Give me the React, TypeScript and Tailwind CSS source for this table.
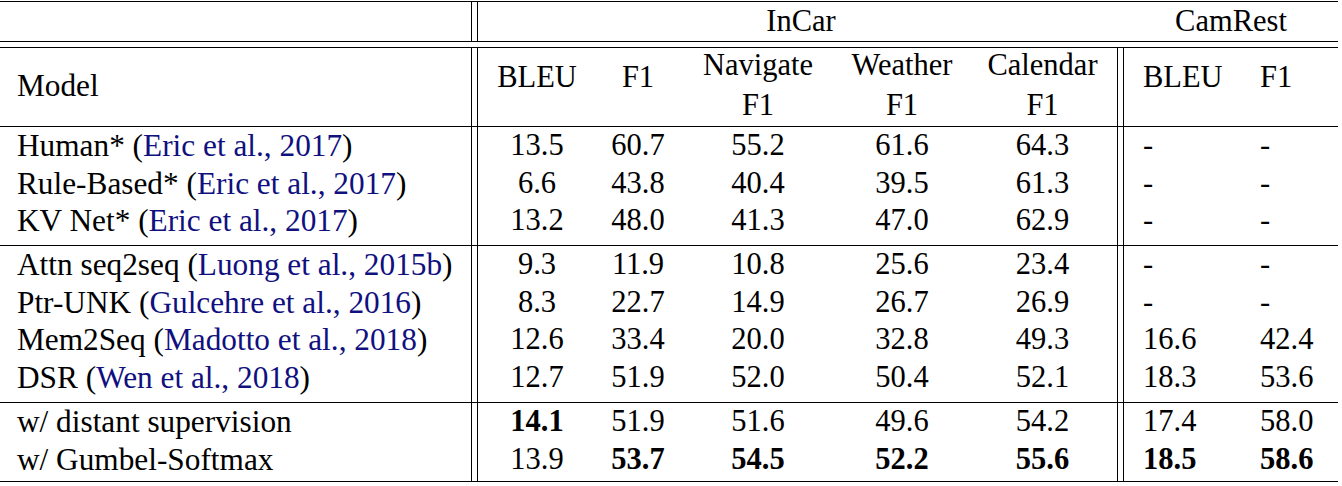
import React from 'react'

type Cell = { v: string; b?: boolean }
type Row = {
  name: string
  cite?: { who: string; year: string }
  incar: Cell[]
  camrest: Cell[]
}

const c = (v: string): Cell => ({ v })
const b = (v: string): Cell => ({ v, b: true })
const dash = [c('-'), c('-')]

const blocks: { last: string; rows: Row[] }[] = [
  {
    last: 'h-[43px]',
    rows: [
      { name: 'Human*', cite: { who: 'Eric et al.', year: '2017' }, incar: ['13.5', '60.7', '55.2', '61.6', '64.3'].map(c), camrest: dash },
      { name: 'Rule-Based*', cite: { who: 'Eric et al.', year: '2017' }, incar: ['6.6', '43.8', '40.4', '39.5', '61.3'].map(c), camrest: dash },
      { name: 'KV Net*', cite: { who: 'Eric et al.', year: '2017' }, incar: ['13.2', '48.0', '41.3', '47.0', '62.9'].map(c), camrest: dash }
    ]
  },
  {
    last: 'h-[43.5px]',
    rows: [
      { name: 'Attn seq2seq', cite: { who: 'Luong et al.', year: '2015b' }, incar: ['9.3', '11.9', '10.8', '25.6', '23.4'].map(c), camrest: dash },
      { name: 'Ptr-UNK', cite: { who: 'Gulcehre et al.', year: '2016' }, incar: ['8.3', '22.7', '14.9', '26.7', '26.9'].map(c), camrest: dash },
      { name: 'Mem2Seq', cite: { who: 'Madotto et al.', year: '2018' }, incar: ['12.6', '33.4', '20.0', '32.8', '49.3'].map(c), camrest: [c('16.6'), c('42.4')] },
      { name: 'DSR', cite: { who: 'Wen et al.', year: '2018' }, incar: ['12.7', '51.9', '52.0', '50.4', '52.1'].map(c), camrest: [c('18.3'), c('53.6')] }
    ]
  },
  {
    last: 'h-[40.5px]',
    rows: [
      { name: 'w/ distant supervision', incar: [b('14.1'), c('51.9'), c('51.6'), c('49.6'), c('54.2')], camrest: [c('17.4'), c('58.0')] },
      { name: 'w/ Gumbel-Softmax', incar: [c('13.9'), b('53.7'), b('54.5'), b('52.2'), b('55.6')], camrest: [b('18.5'), b('58.6')] }
    ]
  }
]

// column boxes, measured off the reference
const incarCols = ['w-[118px]', 'w-[84px]', 'w-[156px]', 'w-[132px]', 'w-[149px]']
const camCols = ['w-[118px] pl-[19px]', 'w-[96px] pl-[18px]']

const Bar = () => <div className="w-[7px] shrink-0 border-x border-black" />

function DataRow({ row, tall }: { row: Row; tall?: string }) {
  return (
    <div className={`flex leading-[37.5px] ${tall ?? ''}`}>
      <div className="w-[471px] shrink-0 pl-[17px] text-[31.3px] whitespace-nowrap">
        {row.name}
        {row.cite && (
          <>
            {' ('}
            <span className="text-[#10107f]">{row.cite.who}, {row.cite.year}</span>
            {')'}
          </>
        )}
      </div>
      <Bar />
      {row.incar.map((cell, i) => (
        <div key={i} className={`${incarCols[i]} shrink-0 text-center ${cell.b ? 'font-bold' : ''}`}>
          {cell.v}
        </div>
      ))}
      <Bar />
      {row.camrest.map((cell, i) => (
        <div key={i} className={`${camCols[i]} shrink-0 text-left ${cell.b ? 'font-bold' : ''}`}>
          {cell.v}
        </div>
      ))}
    </div>
  )
}

export default function App() {
  return (
    <div className="bg-white text-black font-['Liberation_Serif',serif] text-[30.5px]">
      <div className="mt-px w-[1338px] border-t border-black">
        {/* dataset row */}
        <div className="flex h-[39px] leading-[34px]">
          <div className="w-[471px] shrink-0" />
          <Bar />
          <div className="w-[646px] shrink-0 pt-[2px] text-center">InCar</div>
          <div className="w-[214px] shrink-0 pt-[2px] text-center">CamRest</div>
        </div>
        <div className="h-[7px] border-y border-black" />

        {/* metric headers */}
        <div className="flex h-[79px] border-b border-black leading-[34px]">
          <div className="w-[471px] shrink-0 pl-[17px] pt-[21px] text-[31.3px]">Model</div>
          <Bar />
          <div className="w-[118px] shrink-0 pt-[12px] text-center">BLEU</div>
          <div className="w-[84px] shrink-0 pt-[12px] text-center">F1</div>
          {['Navigate', 'Weather', 'Calendar'].map((h, i) => (
            <div key={h} className={`${incarCols[i + 2]} shrink-0 text-center`}>
              <span className="block">{h}</span>
              <span className="mt-[6px] block">F1</span>
            </div>
          ))}
          <Bar />
          <div className="w-[118px] shrink-0 pl-[19px] pt-[12px]">BLEU</div>
          <div className="w-[96px] shrink-0 pl-[18px] pt-[12px]">F1</div>
        </div>

        {blocks.map((block, bi) => (
          <div key={bi} className="border-b border-black">
            {block.rows.map((row, ri) => (
              <DataRow key={row.name} row={row} tall={ri === block.rows.length - 1 ? block.last : undefined} />
            ))}
          </div>
        ))}
      </div>
    </div>
  )
}
